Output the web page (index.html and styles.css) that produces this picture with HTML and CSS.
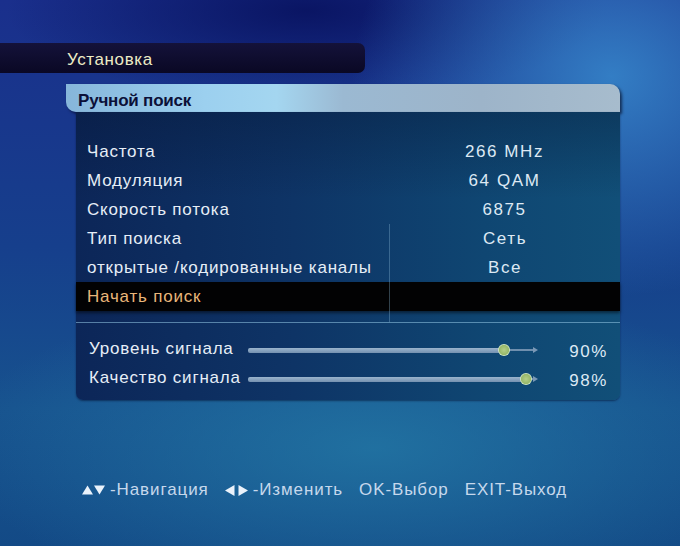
FILE: index.html
```html
<!DOCTYPE html>
<html lang="ru">
<head>
<meta charset="utf-8">
<title>Ручной поиск</title>
<link rel="stylesheet" href="styles.css">
</head>
<body>
<div class="screen">
  <div class="titlebar"><span class="title">Установка</span></div>
  <div class="window">
    <div class="header">Ручной поиск</div>
    <div class="panel">
      <div class="list">
        <div class="row"><span class="label">Частота</span><span class="value">266 MHz</span></div>
        <div class="row"><span class="label">Модуляция</span><span class="value">64 QAM</span></div>
        <div class="row"><span class="label">Скорость потока</span><span class="value">6875</span></div>
        <div class="row divided"><span class="label">Тип поиска</span><span class="value">Сеть</span></div>
        <div class="row divided"><span class="label">открытые /кодированные каналы</span><span class="value">Все</span></div>
        <div class="row divided active"><span class="label">Начать поиск</span><span class="value"></span></div>
        <div class="row divided spacer"><span class="label"></span><span class="value"></span></div>
      </div>
      <div class="signals">
        <div class="sig">
          <span class="sig-label">Уровень сигнала</span>
          <div class="track">
            <div class="fill" style="width:256px"><span class="knob"></span></div>
            <div class="rest"></div>
            <span class="tip"></span>
          </div>
          <span class="pct">90%</span>
        </div>
        <div class="sig">
          <span class="sig-label">Качество сигнала</span>
          <div class="track">
            <div class="fill" style="width:278px"><span class="knob"></span></div>
            <div class="rest"></div>
            <span class="tip"></span>
          </div>
          <span class="pct">98%</span>
        </div>
      </div>
    </div>
  </div>
  <div class="footer">
    <span class="hint"><svg class="keys" width="23" height="10" viewBox="0 0 23 10"><polygon points="0,9.5 5.5,0.5 11,9.5"/><polygon points="12,0.5 23,0.5 17.5,9.5"/></svg>-Навигация</span>
    <span class="hint"><svg class="keys" width="23" height="11" viewBox="0 0 23 11"><polygon points="0,5.5 9.5,0 9.5,11"/><polygon points="13.5,0 23,5.5 13.5,11"/></svg>-Изменить</span>
    <span class="hint">OK-Выбор</span>
    <span class="hint">EXIT-Выход</span>
  </div>
</div>
</body>
</html>
```
FILE: styles.css
```css
* { box-sizing: border-box; }

html, body {
  margin: 0;
  padding: 0;
  background: #133f82;
}

.screen {
  width: 680px;
  height: 546px;
  overflow: hidden;
  padding-top: 43px;
  font-family: "Liberation Sans", Arial, sans-serif;
  font-size: 17px;
  letter-spacing: 0.8px;
  background:
    radial-gradient(ellipse 260px 220px at 90% 14%, rgba(60,150,215,0.75) 0%, rgba(60,150,215,0) 100%),
    radial-gradient(ellipse 420px 160px at 55% 82%, rgba(35,120,165,0.8) 0%, rgba(35,120,165,0) 100%),
    radial-gradient(ellipse 300px 90px at 45% 2%, rgba(8,18,95,0.9) 0%, rgba(8,18,95,0) 100%),
    linear-gradient(180deg, #1a2f8c 0%, #163f8c 45%, #17528e 75%, #134a86 100%);
}

/* top title bar */
.titlebar {
  width: 365px;
  height: 30px;
  margin-bottom: 11px;
  padding-left: 67px;
  padding-top: 4px;
  display: flex;
  align-items: center;
  background: linear-gradient(180deg, #14123a 0%, #0a0824 100%);
  border-radius: 0 7px 7px 0;
}

.title {
  color: #ecebc6;
  letter-spacing: 0.6px;
}

/* window */
.window {
  margin-left: 66px;
  width: 554px;
}

.header {
  height: 28px;
  padding-left: 12px;
  padding-top: 5px;
  display: flex;
  align-items: center;
  color: #0b1038;
  font-weight: bold;
  letter-spacing: -0.2px;
  border-radius: 0 10px 0 10px;
  background: linear-gradient(90deg, #86b6da 0%, #9cd0ef 25%, #a4d6f0 38%, #9bb9d2 50%, #9db4c9 75%, #a7bccd 100%);
  box-shadow: 2px 2px 3px rgba(0,0,20,0.6);
}

.panel {
  margin-left: 10px;
  width: 544px;
  height: 288px;
  border-radius: 0 0 7px 7px;
  background:
    linear-gradient(180deg, rgba(5,20,50,0.35) 0%, rgba(5,20,50,0) 30%),
    linear-gradient(90deg, #0c2658 0%, #0e3466 40%, #0f4672 75%, #114f78 100%);
  box-shadow: 0 1px 2px rgba(0,10,40,0.5);
}

/* list */
.list {
  padding-top: 25px;
  border-bottom: 1px solid rgba(150,200,230,0.55);
}

.row {
  height: 29px;
  display: grid;
  grid-template-columns: 313px 1fr;
  align-items: stretch;
}

.label {
  padding-left: 11px;
  display: flex;
  align-items: center;
  color: #e6eef7;
}

.value {
  display: flex;
  align-items: center;
  justify-content: center;
  color: #dde9f4;
  letter-spacing: 1.6px;
}

.row.divided .value {
  border-left: 1px solid rgba(140,185,215,0.35);
}

.row.active {
  background: #020203;
  box-shadow: 0 2px 3px rgba(0,0,0,0.5);
}

.row.active .label {
  color: #e9b67a;
}

.row.spacer {
  height: 11px;
}

/* signals */
.signals {
  padding-top: 11px;
}

.sig {
  height: 29px;
  display: grid;
  grid-template-columns: 172px 290px 1fr;
  align-items: center;
}

.sig-label {
  padding-left: 13px;
  color: #e6eef7;
}

.track {
  position: relative;
  height: 5px;
  display: flex;
  align-items: center;
  margin-top: 3px;
}

.fill {
  position: relative;
  height: 5px;
  border-radius: 2px;
  background: linear-gradient(180deg, #9ab4cd 0%, #7591b0 100%);
}

.rest {
  flex: 1;
  height: 2px;
  background: #6f8fae;
  margin-right: 4px;
}

.tip {
  position: absolute;
  right: 0;
  top: -1px;
  width: 0;
  height: 0;
  border-left: 5px solid #7a98b6;
  border-top: 3.5px solid transparent;
  border-bottom: 3.5px solid transparent;
}

.knob {
  position: absolute;
  right: -6px;
  top: -3.5px;
  width: 12px;
  height: 12px;
  border-radius: 50%;
  background: radial-gradient(circle at 50% 50%, #b4cf88 0%, #98b86a 55%, #cfe6c0 65%, #e4f2da 100%);
}

.pct {
  justify-self: end;
  padding-right: 12px;
  margin-top: 6px;
  color: #dde9f4;
  letter-spacing: 1.6px;
}

/* footer */
.footer {
  margin-top: 80px;
  padding-left: 82px;
  height: 20px;
  display: flex;
  align-items: center;
  gap: 16px;
  color: #c6d8ec;
  letter-spacing: 0.9px;
}

.hint {
  display: flex;
  align-items: center;
}

.keys {
  fill: #eaf2fb;
  margin-right: 5px;
}
```
